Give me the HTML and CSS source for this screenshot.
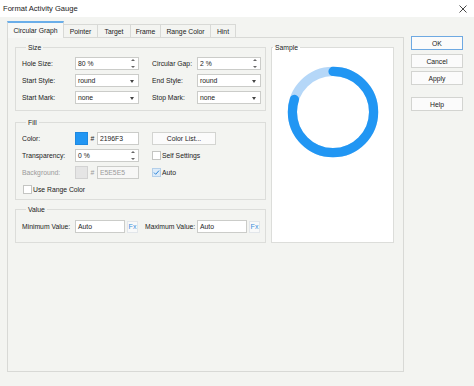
FILE: index.html
```html
<!DOCTYPE html>
<html>
<head>
<meta charset="utf-8">
<link rel="stylesheet" href="styles.css">
</head>
<body>
<div class="titlebar">
  <span class="title">Format Activity Gauge</span>
  <svg class="close" width="8" height="8" viewBox="0 0 8 8"><path d="M0.5 0.5L7.5 7.5M7.5 0.5L0.5 7.5" stroke="#333" stroke-width="0.9"/></svg>
</div>
<div class="main">
  <div class="left">
    <div class="tabs">
      <div class="tab active w57">Circular Graph</div>
      <div class="tab w34">Pointer</div>
      <div class="tab w33">Target</div>
      <div class="tab w30">Frame</div>
      <div class="tab w50">Range Color</div>
      <div class="tab w25">Hint</div>
    </div>
    <div class="panel">
      <div class="groups">
        <fieldset class="group g-size">
          <legend>Size</legend>
          <div class="grid">
            <span class="lbl">Hole Size:</span>
            <div class="input w64 spin"><span>80 %</span><i class="spinner"><b class="up"></b><b class="down"></b></i></div>
            <span class="lbl">Circular Gap:</span>
            <div class="input w64 spin"><span>2 %</span><i class="spinner"><b class="up"></b><b class="down"></b></i></div>

            <span class="lbl">Start Style:</span>
            <div class="input w64 combo"><span>round</span><b class="arrow"></b></div>
            <span class="lbl">End Style:</span>
            <div class="input w64 combo"><span>round</span><b class="arrow"></b></div>

            <span class="lbl">Start Mark:</span>
            <div class="input w64 combo"><span>none</span><b class="arrow"></b></div>
            <span class="lbl">Stop Mark:</span>
            <div class="input w64 combo"><span>none</span><b class="arrow"></b></div>
          </div>
        </fieldset>

        <fieldset class="group g-fill">
          <legend>Fill</legend>
          <div class="grid2">
            <span class="lbl">Color:</span>
            <div class="colorrow">
              <span class="swatch blue"></span><span class="hash">#</span>
              <div class="input w42"><span>2196F3</span></div>
            </div>
            <div class="btn-small">Color List...</div>

            <span class="lbl">Transparency:</span>
            <div class="input w64 spin"><span>0 %</span><i class="spinner"><b class="up"></b><b class="down"></b></i></div>
            <label class="check"><span class="box"></span>Self Settings</label>

            <span class="lbl disabled">Background:</span>
            <div class="colorrow">
              <span class="swatch gray"></span><span class="hash disabled">#</span>
              <div class="input w42 dis"><span>E5E5E5</span></div>
            </div>
            <label class="check"><span class="box checked"><svg width="7" height="7" viewBox="0 0 7 7"><path d="M1 3.6L2.7 5.3L6 1.6" fill="none" stroke="#2f86d8" stroke-width="1"/></svg></span>Auto</label>

            <label class="check span3"><span class="box"></span>Use Range Color</label>
          </div>
        </fieldset>

        <fieldset class="group g-value">
          <legend>Value</legend>
          <div class="valrow">
            <span class="lbl">Minimum Value:</span>
            <div class="input w50"><span>Auto</span></div>
            <span class="fx">Fx</span>
            <span class="lbl lbl2">Maximum Value:</span>
            <div class="input w50"><span>Auto</span></div>
            <span class="fx">Fx</span>
          </div>
        </fieldset>
      </div>

      <fieldset class="group sample">
        <legend>Sample</legend>
        <svg class="ring" width="92" height="92" viewBox="0 0 92 92">
          <circle cx="46" cy="46" r="40.6" fill="none" stroke="#b5d7f8" stroke-width="9.2"/>
          <circle cx="46" cy="46" r="40.6" fill="none" stroke="#2196F3" stroke-width="9.2" stroke-linecap="round" stroke-dasharray="204 400" transform="rotate(-90 46 46)"/>
        </svg>
      </fieldset>
    </div>
  </div>
  <div class="buttons">
    <div class="btn default">OK</div>
    <div class="btn b-cancel">Cancel</div>
    <div class="btn b-apply">Apply</div>
    <div class="btn b-help">Help</div>
  </div>
</div>
</body>
</html>
```
FILE: styles.css
```css
html, body {
  margin: 0;
  padding: 0;
}
body {
  width: 474px;
  height: 386px;
  overflow: hidden;
  background: #f3f4f1;
  font-family: "Liberation Sans", Arial, sans-serif;
  font-size: 6.8px;
  color: #222;
}
.titlebar {
  height: 17px;
  background: #ffffff;
  display: flex;
  align-items: center;
  justify-content: space-between;
  padding: 0 7px 0 3px;
}
.title {
  font-size: 7.6px;
  color: #1a1a1a;
}
.main {
  display: flex;
  padding: 4px 0 0 7px;
  gap: 7px;
}
.left {
  width: 397px;
}
.tabs {
  display: flex;
  align-items: flex-end;
  height: 16px;
  position: relative;
  z-index: 1;
}
.tab {
  box-sizing: border-box;
  height: 13px;
  border: 1px solid #d8d9d6;
  border-bottom: none;
  border-left: none;
  display: flex;
  align-items: center;
  justify-content: center;
  background: #f3f4f1;
  color: #222;
}
.tab.active {
  height: 17px;
  margin-bottom: -1px;
  border-left: 1px solid #d8d9d6;
  border-top: 2px solid #6aaee9;
  background: #f7f8f6;
  padding-bottom: 1px;
}
.w57 { width: 57px; }
.w34 { width: 34px; }
.w33 { width: 33px; }
.w30 { width: 30px; }
.w50 { width: 50px; }
.w25 { width: 25px; }
.panel {
  box-sizing: border-box;
  height: 335px;
  border: 1px solid #d8d9d6;
  display: flex;
  align-items: flex-start;
  gap: 5px;
  padding: 5px 9px 0 7px;
}
.groups {
  width: 251px;
  display: flex;
  flex-direction: column;
}
.group {
  margin: 0;
  min-width: 0;
  border: 1px solid #dcddda;
  padding: 5px 4px 6px 6px;
}
.group legend {
  padding: 0 2px;
  margin-left: 4px;
  line-height: 9px;
  height: 9px;
  color: #222;
}
.g-fill {
  margin-top: 7px;
  padding-bottom: 3px;
}
.g-value {
  margin-top: 5px;
  padding-top: 6px;
  padding-bottom: 9px;
}
.grid {
  display: grid;
  grid-template-columns: 53px 77px 45px 64px;
  grid-auto-rows: 13px;
  row-gap: 4px;
  align-items: center;
}
.grid2 {
  display: grid;
  grid-template-columns: 53px 77px 109px;
  grid-auto-rows: 13px;
  row-gap: 4px;
  align-items: center;
}
.span3 {
  grid-column: 1 / 4;
  margin-left: 1px;
}
.lbl {
  white-space: nowrap;
}
.disabled {
  color: #9a9a9a;
}
.input {
  box-sizing: border-box;
  height: 13px;
  background: #ffffff;
  border: 1px solid #cbccc9;
  display: flex;
  align-items: center;
  padding-left: 2px;
  position: relative;
}
.input.dis {
  background: #f7f7f6;
  color: #9a9a9a;
}
.w64 { width: 64px; }
.w42 { width: 42px; }
.input.w50 { width: 50px; }
.spinner {
  position: absolute;
  right: 2px;
  top: 1px;
  width: 6px;
  height: 9px;
  display: flex;
  flex-direction: column;
  justify-content: space-between;
  align-items: center;
}
.spinner b {
  width: 0;
  height: 0;
  border-left: 2px solid transparent;
  border-right: 2px solid transparent;
}
.spinner .up {
  border-bottom: 2px solid #666;
}
.spinner .down {
  border-top: 2px solid #666;
}
.arrow {
  position: absolute;
  right: 4px;
  top: 5px;
  width: 0;
  height: 0;
  border-left: 2.5px solid transparent;
  border-right: 2.5px solid transparent;
  border-top: 3px solid #444;
}
.colorrow {
  display: flex;
  align-items: center;
}
.swatch {
  box-sizing: border-box;
  width: 13px;
  height: 13px;
  display: block;
}
.swatch.blue {
  background: #2196F3;
  border: 1px solid #1e88e0;
}
.swatch.gray {
  background: #e5e5e5;
  border: 1px solid #d2d2d2;
}
.hash {
  width: 9px;
  text-align: center;
}
.btn-small {
  box-sizing: border-box;
  width: 64px;
  height: 13px;
  border: 1px solid #d3d4d1;
  background: #fbfbfb;
  display: flex;
  align-items: center;
  justify-content: center;
}
.check {
  display: flex;
  align-items: center;
  gap: 1px;
  white-space: nowrap;
}
.box {
  box-sizing: border-box;
  width: 9px;
  height: 9px;
  background: #ffffff;
  border: 1px solid #c4c5c2;
  display: flex;
  align-items: center;
  justify-content: center;
}
.box.checked {
  background: #dcebf9;
  border-color: #b4cfe9;
}
.valrow {
  display: flex;
  align-items: center;
  height: 13px;
}
.valrow .lbl {
  width: 53px;
}
.valrow .lbl.lbl2 {
  width: 52px;
  margin-left: 7px;
}
.fx {
  box-sizing: border-box;
  width: 11px;
  height: 12px;
  margin-left: 2px;
  display: flex;
  align-items: center;
  justify-content: center;
  color: #3a8fdc;
  font-size: 7px;
  border: 1px solid #e2e6ea;
  background: #f8f9f9;
}
.sample {
  box-sizing: border-box;
  width: 123px;
  height: 200px;
  background: #ffffff;
  padding: 14px 0 0 0;
  display: flex;
  flex-direction: column;
  align-items: center;
}
.sample legend {
  margin-left: 1px;
}
.ring {
  display: block;
}
.buttons {
  width: 52px;
  padding-top: 15px;
  display: flex;
  flex-direction: column;
}
.btn {
  box-sizing: border-box;
  height: 14px;
  border: 1px solid #d3d4d1;
  background: #fbfbfb;
  display: flex;
  align-items: center;
  justify-content: center;
}
.btn.default {
  border-color: #6ea9e2;
}
.b-cancel { margin-top: 4px; }
.b-apply { margin-top: 3px; }
.b-help { margin-top: 12px; }
```
